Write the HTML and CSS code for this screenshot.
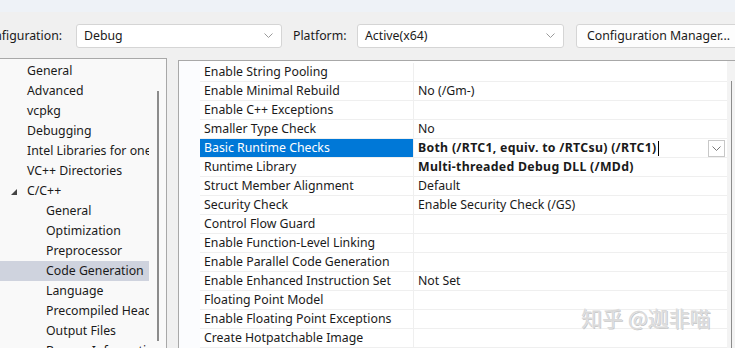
FILE: index.html
```html
<!DOCTYPE html>
<html lang="en">

<head>
    <meta charset="UTF-8">
    <title>Property Pages</title>
    <link rel="stylesheet" href="styles.css">
</head>

<body>

    <div class="titlebar"></div>

    <div class="toolbar">
        <span class="tb-label cfg-label">Configuration:</span>
        <div class="combo combo-cfg">
            <span>Debug</span>
            <svg class="chev" width="9" height="5" viewBox="0 0 9 5"><path d="M0.5 0.5 L4.5 4.5 L8.5 0.5" fill="none" stroke="#9a9a9a" stroke-width="1"/></svg>
        </div>
        <span class="tb-label plat-label">Platform:</span>
        <div class="combo combo-plat">
            <span>Active(x64)</span>
            <svg class="chev" width="9" height="5" viewBox="0 0 9 5"><path d="M0.5 0.5 L4.5 4.5 L8.5 0.5" fill="none" stroke="#9a9a9a" stroke-width="1"/></svg>
        </div>
        <button class="btn">Configuration Manager...</button>
    </div>

    <div class="main">
        <div class="tree">
            <ul class="tree-list">
                <li class="lvl1">General</li>
                <li class="lvl1">Advanced</li>
                <li class="lvl1">vcpkg</li>
                <li class="lvl1">Debugging</li>
                <li class="lvl1">Intel Libraries for oneAPI</li>
                <li class="lvl1">VC++ Directories</li>
                <li class="lvl1 open">
                    <svg class="expander" width="6" height="6" viewBox="0 0 6 6"><path d="M6 0 L6 6 L0 6 Z" fill="#444"/></svg>C/C++
                </li>
                <li class="lvl2">General</li>
                <li class="lvl2">Optimization</li>
                <li class="lvl2">Preprocessor</li>
                <li class="lvl2 selected">Code Generation</li>
                <li class="lvl2">Language</li>
                <li class="lvl2">Precompiled Headers</li>
                <li class="lvl2">Output Files</li>
                <li class="lvl2">Browse Information</li>
            </ul>
            <div class="tree-scroll"><span class="thumb"></span></div>
        </div>

        <div class="grid">
            <div class="gutter"></div>
            <div class="props">
                <div class="row"><div class="name">Enable String Pooling</div><div class="value"></div></div>
                <div class="row"><div class="name">Enable Minimal Rebuild</div><div class="value">No (/Gm-)</div></div>
                <div class="row"><div class="name">Enable C++ Exceptions</div><div class="value"></div></div>
                <div class="row"><div class="name">Smaller Type Check</div><div class="value">No</div></div>
                <div class="row selected">
                    <div class="name">Basic Runtime Checks</div>
                    <div class="value bold">Both (/RTC1, equiv. to /RTCsu) (/RTC1)<span class="caret"></span>
                        <span class="drop">
                            <svg width="9" height="5" viewBox="0 0 9 5"><path d="M0.5 0.5 L4.5 4.5 L8.5 0.5" fill="none" stroke="#777" stroke-width="1"/></svg>
                        </span>
                    </div>
                </div>
                <div class="row"><div class="name">Runtime Library</div><div class="value bold">Multi-threaded Debug DLL (/MDd)</div></div>
                <div class="row"><div class="name">Struct Member Alignment</div><div class="value">Default</div></div>
                <div class="row"><div class="name">Security Check</div><div class="value">Enable Security Check (/GS)</div></div>
                <div class="row"><div class="name">Control Flow Guard</div><div class="value"></div></div>
                <div class="row"><div class="name">Enable Function-Level Linking</div><div class="value"></div></div>
                <div class="row"><div class="name">Enable Parallel Code Generation</div><div class="value"></div></div>
                <div class="row"><div class="name">Enable Enhanced Instruction Set</div><div class="value">Not Set</div></div>
                <div class="row"><div class="name">Floating Point Model</div><div class="value"></div></div>
                <div class="row"><div class="name">Enable Floating Point Exceptions</div><div class="value"></div></div>
                <div class="row"><div class="name">Create Hotpatchable Image</div><div class="value"></div></div>
            </div>
            <div class="grid-scroll"><span class="thumb"></span></div>
        </div>

        <div class="watermark">知乎 @迦非喵</div>
    </div>

</body>

</html>
```

FILE: styles.css
```css
body {
    margin: 0;
    width: 735px;
    height: 348px;
    overflow: hidden;
    background-color: #f0f0f0;
    font-family: "Noto Sans", sans-serif;
    font-size: 12.3px;
    color: #1a1a1a;
}

.titlebar {
    height: 12px;
    background-color: #eef2f7;
}

.toolbar {
    display: flex;
    align-items: center;
    height: 46px;
    box-sizing: border-box;
    padding-top: 1px;
}

.toolbar > * {
    flex-shrink: 0;
}

.tb-label {
    white-space: nowrap;
}

.cfg-label {
    margin-left: -21px;
    width: 97px;
}

.plat-label {
    margin-left: 11px;
    width: 64px;
}

.combo {
    display: flex;
    align-items: center;
    justify-content: space-between;
    height: 24px;
    box-sizing: border-box;
    padding: 0 8px 0 7px;
    background-color: #fff;
    border: 1px solid #d5d5d5;
    border-radius: 3px;
}

.combo-cfg {
    width: 206px;
}

.combo-plat {
    width: 207px;
}

.btn {
    margin-left: 12px;
    height: 24px;
    width: 170px;
    padding: 0 0 0 10px;
    text-align: left;
    font-family: inherit;
    font-size: 12.3px;
    color: #1a1a1a;
    background-color: #fdfdfd;
    border: 1px solid #d5d5d5;
    border-radius: 3px;
    white-space: nowrap;
}

.main {
    position: relative;
    display: flex;
    align-items: flex-start;
    gap: 11px;
}

.tree {
    position: relative;
    width: 166px;
    height: 300px;
    background-color: #f9f9f9;
    border-top: 1px solid #a8a8a8;
    border-right: 1px solid #a8a8a8;
    overflow: hidden;
}

.tree-list {
    list-style: none;
    margin: 0;
    padding: 2px 0 0 0;
    width: 149px;
    overflow: hidden;
}

.tree-list li {
    height: 20px;
    line-height: 20px;
    white-space: nowrap;
    overflow: hidden;
}

.lvl1 {
    padding-left: 27px;
}

.lvl2 {
    padding-left: 46px;
}

.tree-list .open {
    position: relative;
}

.expander {
    position: absolute;
    left: 11px;
    top: 8px;
}

.tree-list .selected {
    background-color: #cfd3de;
}

.tree-scroll {
    position: absolute;
    top: 0;
    right: 0;
    width: 17px;
    height: 100%;
}

.tree-scroll .thumb {
    position: absolute;
    left: 8px;
    top: 32px;
    width: 2px;
    height: 250px;
    background-color: #8c8c8c;
}

.grid {
    flex: 1;
    display: flex;
    margin-top: 2px;
    height: 300px;
    background-color: #fff;
    border-top: 1px solid #a8a8a8;
    border-left: 1px solid #a8a8a8;
}

.gutter {
    width: 21px;
    background-color: #fbfcfe;
}

.props {
    width: 527px;
    padding-top: 2px;
}

.row {
    display: flex;
    height: 19px;
    line-height: 18px;
    border-bottom: 1px solid #efefef;
    box-sizing: border-box;
}

.name {
    width: 214px;
    padding-left: 4px;
    box-sizing: border-box;
    border-right: 1px solid #efefef;
    white-space: nowrap;
    overflow: hidden;
}

.value {
    position: relative;
    flex: 1;
    padding-left: 4px;
    white-space: nowrap;
}

.bold {
    font-weight: bold;
    letter-spacing: 0.3px;
}

.row.selected .name {
    background-color: #0078d7;
    color: #fff;
}

.caret {
    display: inline-block;
    width: 1px;
    height: 15px;
    margin-left: 1px;
    vertical-align: middle;
    background-color: #000;
}

.drop {
    position: absolute;
    right: 2px;
    top: 1px;
    width: 15px;
    height: 15px;
    display: flex;
    align-items: center;
    justify-content: center;
    background-color: #fff;
    border: 1px solid #c8c8c8;
}

.grid-scroll {
    position: relative;
    flex: 1;
    background-color: #f3f3f3;
}

.grid-scroll .thumb {
    position: absolute;
    left: 4px;
    top: 20px;
    width: 1px;
    height: 280px;
    background-color: #8c8c8c;
}

.watermark {
    position: absolute;
    left: 581px;
    top: 244px;
    font-family: "Noto Sans CJK SC", sans-serif;
    font-size: 21px;
    color: #dadada;
    text-shadow: 0 0 1px #fff, 1px 1px 0 #c6c6c6;
    white-space: nowrap;
}
```
